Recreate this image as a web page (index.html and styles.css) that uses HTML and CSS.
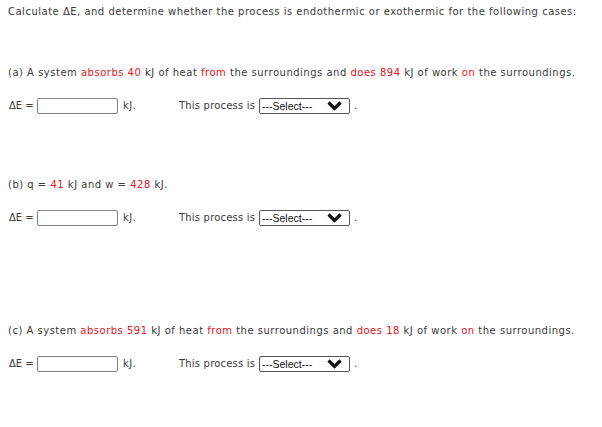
FILE: index.html
```html
<!DOCTYPE html>
<html>
<head>
<meta charset="utf-8">
<link rel="stylesheet" href="styles.css">
</head>
<body>
<p class="intro">Calculate ΔE, and determine whether the process is endothermic or exothermic for the following cases:</p>

<section class="case case-a">
  <p class="prompt">(a) A system <span class="hl">absorbs 40</span> kJ of heat <span class="hl">from</span> the surroundings and <span class="hl">does 894</span> kJ of work <span class="hl">on</span> the surroundings.</p>
  <div class="answer">
    <span class="lbl">ΔE =</span>
    <span class="field"></span>
    <span class="unit">kJ.</span>
    <span class="proc">This process is</span>
    <span class="select"><span class="sel-text">---Select---</span><svg class="chev" width="15" height="10" viewBox="0 0 15 10"><path d="M1.5 1.5 L7.5 7.5 L13.5 1.5" fill="none" stroke="#111" stroke-width="3.2"/></svg></span>
    <span class="dot">.</span>
  </div>
</section>

<section class="case case-b">
  <p class="prompt">(b) q = <span class="hl">41</span> kJ and w = <span class="hl">428</span> kJ.</p>
  <div class="answer">
    <span class="lbl">ΔE =</span>
    <span class="field"></span>
    <span class="unit">kJ.</span>
    <span class="proc">This process is</span>
    <span class="select"><span class="sel-text">---Select---</span><svg class="chev" width="15" height="10" viewBox="0 0 15 10"><path d="M1.5 1.5 L7.5 7.5 L13.5 1.5" fill="none" stroke="#111" stroke-width="3.2"/></svg></span>
    <span class="dot">.</span>
  </div>
</section>

<section class="case case-c">
  <p class="prompt">(c) A system <span class="hl">absorbs 591</span> kJ of heat <span class="hl">from</span> the surroundings and <span class="hl">does 18</span> kJ of work <span class="hl">on</span> the surroundings.</p>
  <div class="answer">
    <span class="lbl">ΔE =</span>
    <span class="field"></span>
    <span class="unit">kJ.</span>
    <span class="proc">This process is</span>
    <span class="select"><span class="sel-text">---Select---</span><svg class="chev" width="15" height="10" viewBox="0 0 15 10"><path d="M1.5 1.5 L7.5 7.5 L13.5 1.5" fill="none" stroke="#111" stroke-width="3.2"/></svg></span>
    <span class="dot">.</span>
  </div>
</section>
</body>
</html>
```

FILE: styles.css
```css
html, body {
  margin: 0;
  padding: 0;
  background: #fff;
}
body {
  padding: 5px 8px 0 8px;
  font-family: "DejaVu Sans", Verdana, sans-serif;
  font-size: 10px;
  letter-spacing: 0.5px;
  line-height: 14px;
  color: #3a3a3a;
}
p {
  margin: 0;
}
.hl {
  color: #e8101a;
}
.case-a {
  margin-top: 47px;
}
.case-b {
  margin-top: 64px;
}
.case-c {
  margin-top: 98px;
}
.answer {
  display: flex;
  align-items: center;
  margin-top: 18px;
  height: 16px;
}
.lbl {
  margin-left: 1px;
  width: 28px;
  letter-spacing: 0;
  white-space: nowrap;
}
.field {
  display: block;
  width: 79px;
  height: 14px;
  border: 1px solid #808080;
  border-radius: 2px;
  background: #fff;
}
.unit {
  margin-left: 5px;
  width: 56px;
}
.proc {
  width: 80px;
  letter-spacing: 0.2px;
  white-space: nowrap;
}
.select {
  display: flex;
  align-items: center;
  justify-content: space-between;
  box-sizing: border-box;
  width: 91px;
  height: 16px;
  border: 1px solid #555;
  border-radius: 2px;
  padding: 0 7px 0 2px;
  font-family: "Liberation Sans", Arial, sans-serif;
  font-size: 10.5px;
  letter-spacing: 0;
  color: #111;
}
.chev {
  display: block;
}
.dot {
  margin-left: 4px;
}
```
